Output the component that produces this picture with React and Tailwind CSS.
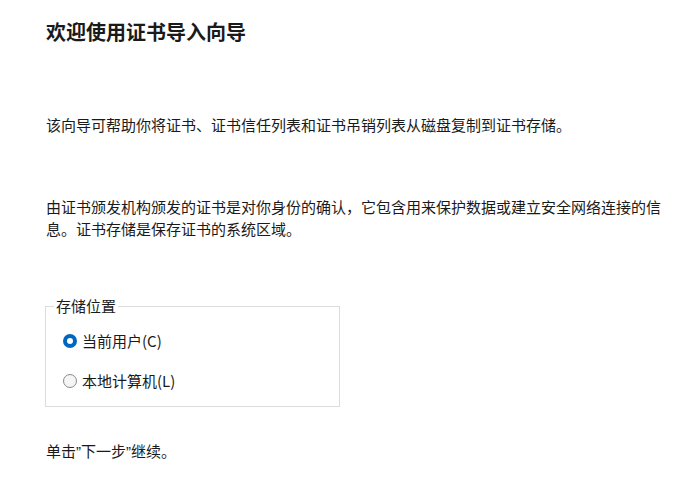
import React, { useState } from "react";

const font = { fontFamily: '"Noto Sans CJK SC", "Noto Sans", sans-serif' };
const latin = { fontFamily: '"Liberation Sans", sans-serif' };

const Radio = ({ checked, label, onClick }) => (
  <label className="flex items-center gap-[5px] h-[22px] cursor-default" onClick={onClick}>
    {checked ? (
      <span className="w-[14px] h-[14px] rounded-full bg-[#0067c0] flex items-center justify-center">
        <span className="w-[6px] h-[6px] rounded-full bg-white" />
      </span>
    ) : (
      <span className="w-[14px] h-[14px] rounded-full border border-[#8a8a8a] bg-[#f5f5f5]" />
    )}
    <span>{label}</span>
  </label>
);

export default function App() {
  const [store, setStore] = useState("user");

  return (
    <div className="w-[693px] h-[495px] bg-white text-[#1a1a1a] pl-[46px]" style={font}>
      <div className="pt-[18px] text-[20px] leading-[28px] font-bold">欢迎使用证书导入向导</div>

      <p className="mt-[68px] text-[15px] leading-[22px]">
        该向导可帮助你将证书、证书信任列表和证书吊销列表从磁盘复制到证书存储。
      </p>

      <p className="mt-[60px] w-[620px] text-[15px] leading-[22px]">
        由证书颁发机构颁发的证书是对你身份的确认，它包含用来保护数据或建立安全网络连接的信息。证书存储是保存证书的系统区域。
      </p>

      <fieldset className="mt-[55px] -ml-px w-[295px] border border-[#dcdcdc] px-[8px] text-[15px]">
        <legend className="px-[2px] leading-[22px]">存储位置</legend>
        <div className="pl-[9px] pt-[13px] pb-[14px] flex flex-col gap-[18px]">
          <Radio checked={store === "user"} label="当前用户(C)" onClick={() => setStore("user")} />
          <Radio checked={store === "machine"} label="本地计算机(L)" onClick={() => setStore("machine")} />
        </div>
      </fieldset>

      <p className="mt-[33px] text-[15px] leading-[22px]">
        单击<span style={latin}>”</span>下一步<span style={latin}>”</span>继续。
      </p>
    </div>
  );
}
